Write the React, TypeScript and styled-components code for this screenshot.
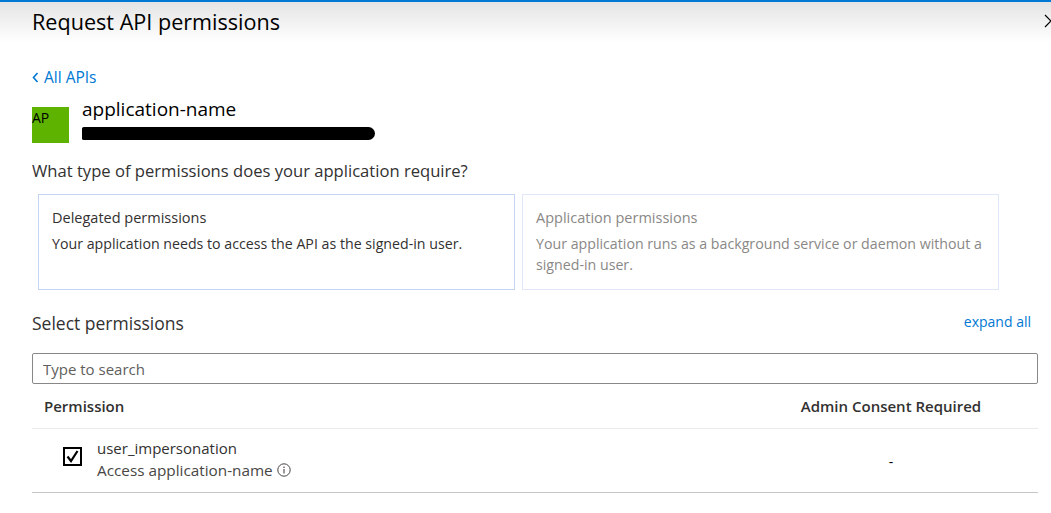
import styled, { createGlobalStyle } from 'styled-components'

const GlobalStyle = createGlobalStyle`
  html, body {
    margin: 0;
    padding: 0;
    background: #ffffff;
  }
  body {
    font-family: 'Open Sans', 'Segoe UI', 'Noto Sans', sans-serif;
    color: #323130;
  }
`

const Page = styled.div`
  width: 1051px;
  height: 513px;
  overflow: hidden;
  background: #ffffff;
`

const Header = styled.header`
  border-top: 2px solid #0078d4;
  height: 40px;
  background: linear-gradient(to bottom, #e4e4e4 0%, #ffffff 100%);
  display: flex;
  align-items: center;
  justify-content: space-between;
  padding-left: 32px;
`

const Title = styled.h1`
  margin: 0;
  font-size: 21.6px;
  font-weight: 400;
  line-height: 28px;
  color: #000000;
`

const CloseButton = styled.button`
  border: none;
  background: none;
  padding: 0;
  margin-right: -4px;
  margin-top: -2px;
  display: flex;
  cursor: pointer;
`

const Body = styled.div`
  padding: 0 13px 0 32px;
`

const BackLink = styled.a`
  margin-top: 25px;
  display: flex;
  align-items: center;
  gap: 5px;
  height: 20px;
  font-size: 15.5px;
  color: #0078d4;
  text-decoration: none;
  cursor: pointer;
`

const AppRow = styled.div`
  margin-top: 11px;
  display: flex;
  gap: 13px;
  align-items: flex-start;
`

const AppAvatar = styled.div`
  margin-top: 9px;
  width: 37px;
  height: 36px;
  background: #5db300;
  color: #000000;
  font-size: 14px;
  line-height: 20px;
  box-sizing: border-box;
  padding-top: 1px;
`

const AppInfo = styled.div`
  display: flex;
  flex-direction: column;
`

const AppName = styled.div`
  font-size: 19px;
  line-height: 22px;
  color: #000000;
`

const Redacted = styled.span`
  margin-top: 7px;
  width: 293px;
  height: 13px;
  background: #000000;
  border-radius: 2px 7px 7px 2px;
`

const Question = styled.p`
  margin: 17px 0 0;
  font-size: 16.6px;
  line-height: 22px;
  color: #323130;
`

const Cards = styled.div`
  margin: 12px 0 0 6px;
  display: flex;
  gap: 7px;
`

const TypeCard = styled.div<{ $selected?: boolean }>`
  width: 477px;
  height: 96px;
  box-sizing: border-box;
  border: 1px solid ${({ $selected }) => ($selected ? '#c5d4f4' : '#dfe7f8')};
  padding: 13px 13px 0;
  color: ${({ $selected }) => ($selected ? '#323130' : '#8a8886')};
  cursor: pointer;
`

const CardTitle = styled.div`
  font-size: 14.5px;
  line-height: 20px;
  font-weight: 500;
`

const CardText = styled.div`
  margin-top: 5px;
  font-size: 14.2px;
  line-height: 21px;
`

const SectionRow = styled.div`
  margin-top: 21px;
  display: flex;
  align-items: center;
  justify-content: space-between;
`

const SectionTitle = styled.h2`
  margin: 0;
  font-size: 17.5px;
  font-weight: 400;
  line-height: 24px;
  color: #323130;
`

const ExpandLink = styled.a`
  margin-right: 7px;
  margin-top: -4px;
  font-size: 14px;
  color: #0078d4;
  cursor: pointer;
`

const SearchInput = styled.input`
  margin-top: 18px;
  display: block;
  width: 100%;
  height: 31px;
  box-sizing: border-box;
  border: 1px solid #8a8886;
  border-radius: 2px;
  padding: 0 10px;
  font-family: inherit;
  font-size: 15px;
  color: #323130;
  outline: none;
  &::placeholder {
    color: #605e5c;
  }
`

const TableRow = styled.div<{ $head?: boolean }>`
  display: grid;
  grid-template-columns: 1fr 294px;
  height: ${({ $head }) => ($head ? '44px' : '63px')};
  border-bottom: 1px solid ${({ $head }) => ($head ? '#edebe9' : '#c8c6c4')};
  align-items: ${({ $head }) => ($head ? 'center' : 'start')};
`

const HeadCell = styled.div<{ $center?: boolean }>`
  padding-left: ${({ $center }) => ($center ? '0' : '12px')};
  text-align: ${({ $center }) => ($center ? 'center' : 'left')};
  font-size: 15px;
  font-weight: 600;
  color: #323130;
`

const PermCell = styled.div`
  display: flex;
  gap: 15px;
  padding: 8px 0 0 31px;
`

const CheckBox = styled.span`
  margin-top: 10px;
  display: flex;
`

const PermText = styled.div`
  display: flex;
  flex-direction: column;
`

const PermName = styled.div`
  font-size: 15px;
  line-height: 22px;
  color: #323130;
`

const PermDesc = styled.div`
  display: flex;
  align-items: center;
  gap: 4px;
  font-size: 15.3px;
  line-height: 22px;
  color: #484644;
`

const ConsentCell = styled.div`
  padding-top: 22px;
  text-align: center;
  font-size: 14px;
  line-height: 22px;
  color: #000000;
`

export default function App() {
  return (
    <Page>
      <GlobalStyle />
      <Header>
        <Title>Request API permissions</Title>
        <CloseButton aria-label="Close">
          <svg width="12" height="16" viewBox="0 0 12 16">
            <polyline points="2,2 8,8 2,14" fill="none" stroke="#000" strokeWidth="1.2" />
          </svg>
        </CloseButton>
      </Header>

      <Body>
        <BackLink>
          <svg width="7" height="11" viewBox="0 0 7 11">
            <polyline points="5.5,1 1.5,5.5 5.5,10" fill="none" stroke="#0078d4" strokeWidth="1.6" />
          </svg>
          All APIs
        </BackLink>

        <AppRow>
          <AppAvatar>AP</AppAvatar>
          <AppInfo>
            <AppName>application-name</AppName>
            <Redacted />
          </AppInfo>
        </AppRow>

        <Question>What type of permissions does your application require?</Question>

        <Cards>
          <TypeCard $selected>
            <CardTitle>Delegated permissions</CardTitle>
            <CardText>Your application needs to access the API as the signed-in user.</CardText>
          </TypeCard>
          <TypeCard>
            <CardTitle>Application permissions</CardTitle>
            <CardText>
              Your application runs as a background service or daemon without a signed-in user.
            </CardText>
          </TypeCard>
        </Cards>

        <SectionRow>
          <SectionTitle>Select permissions</SectionTitle>
          <ExpandLink>expand all</ExpandLink>
        </SectionRow>

        <SearchInput placeholder="Type to search" />

        <TableRow $head>
          <HeadCell>Permission</HeadCell>
          <HeadCell $center>Admin Consent Required</HeadCell>
        </TableRow>

        <TableRow>
          <PermCell>
            <CheckBox>
              <svg width="19" height="19" viewBox="0 0 19 19">
                <rect x="1" y="1" width="17" height="17" fill="#fff" stroke="#000" strokeWidth="2" />
                <polyline points="4.5,9.5 8,14 14.5,4" fill="none" stroke="#000" strokeWidth="2.2" />
              </svg>
            </CheckBox>
            <PermText>
              <PermName>user_impersonation</PermName>
              <PermDesc>
                Access application-name
                <svg width="14" height="14" viewBox="0 0 14 14">
                  <circle cx="7" cy="7" r="6.2" fill="none" stroke="#484644" strokeWidth="1" />
                  <circle cx="7" cy="4.2" r="0.8" fill="#484644" />
                  <line x1="7" y1="6" x2="7" y2="10.5" stroke="#484644" strokeWidth="1.1" />
                </svg>
              </PermDesc>
            </PermText>
          </PermCell>
          <ConsentCell>-</ConsentCell>
        </TableRow>
      </Body>
    </Page>
  )
}
